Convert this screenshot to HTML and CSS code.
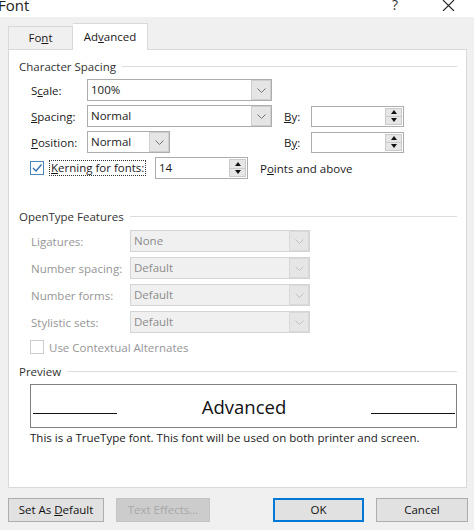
FILE: index.html
```html
<!DOCTYPE html>
<html>
<head>
<meta charset="utf-8">
<link rel="stylesheet" href="styles.css">
</head>
<body>
<div class="dialog">
  <div class="titlebar">
    <span class="title">Font</span>
    <span class="help">?</span>
    <svg class="close" width="13" height="11" viewBox="0 0 13 11"><path d="M1 0 L12 11 M12 0 L1 11" stroke="#222" stroke-width="1.1" fill="none"/></svg>
  </div>
  <div class="tabs">
    <div class="tab">Fo<u>n</u>t</div>
    <div class="tab active">Ad<u>v</u>anced</div>
  </div>
  <div class="panel">
    <div class="group-title gt-char"><span>Character Spacing</span><i></i></div>

    <div class="crow r1">
      <span class="lbl">S<u>c</u>ale:</span>
      <div class="combo w185"><span class="val">100%</span><span class="dd"><svg width="9" height="5" viewBox="0 0 9 5"><polyline points="0.5,0.5 4.5,4.5 8.5,0.5" fill="none" stroke="#707070"/></svg></span></div>
    </div>
    <div class="crow">
      <span class="lbl"><u>S</u>pacing:</span>
      <div class="combo w185"><span class="val">Normal</span><span class="dd"><svg width="9" height="5" viewBox="0 0 9 5"><polyline points="0.5,0.5 4.5,4.5 8.5,0.5" fill="none" stroke="#707070"/></svg></span></div>
      <span class="by"><u>B</u>y:</span>
      <div class="spin"><span class="val"></span><span class="arrows"><span class="up"></span><span class="dn"></span></span></div>
    </div>
    <div class="crow">
      <span class="lbl"><u>P</u>osition:</span>
      <div class="cell"><div class="combo w83"><span class="val">Normal</span><span class="dd"><svg width="9" height="5" viewBox="0 0 9 5"><polyline points="0.5,0.5 4.5,4.5 8.5,0.5" fill="none" stroke="#707070"/></svg></span></div></div>
      <span class="by">B<u>y</u>:</span>
      <div class="spin"><span class="val"></span><span class="arrows"><span class="up"></span><span class="dn"></span></span></div>
    </div>
    <div class="krow">
      <div class="kcheck">
        <span class="cb checked"><svg width="12" height="12" viewBox="0 0 12 12"><polyline points="2,6 5,9 10.5,2.5" fill="none" stroke="#2f6fb0" stroke-width="1.3"/></svg></span>
        <span class="focus"><u>K</u>erning for fonts:</span>
      </div>
      <div class="spin"><span class="val">14</span><span class="arrows"><span class="up"></span><span class="dn"></span></span></div>
      <span class="pts">P<u>o</u>ints and above</span>
    </div>

    <div class="group-title gt-open"><span>OpenType Features</span><i></i></div>

    <div class="orow o1">
      <span class="olbl">Ligatures:</span>
      <div class="combo dis"><span class="val">None</span><span class="dd"><svg width="9" height="5" viewBox="0 0 9 5"><polyline points="0.5,0.5 4.5,4.5 8.5,0.5" fill="none" stroke="#c0c0c0"/></svg></span></div>
    </div>
    <div class="orow">
      <span class="olbl">Number spacing:</span>
      <div class="combo dis"><span class="val">Default</span><span class="dd"><svg width="9" height="5" viewBox="0 0 9 5"><polyline points="0.5,0.5 4.5,4.5 8.5,0.5" fill="none" stroke="#c0c0c0"/></svg></span></div>
    </div>
    <div class="orow">
      <span class="olbl">Number forms:</span>
      <div class="combo dis"><span class="val">Default</span><span class="dd"><svg width="9" height="5" viewBox="0 0 9 5"><polyline points="0.5,0.5 4.5,4.5 8.5,0.5" fill="none" stroke="#c0c0c0"/></svg></span></div>
    </div>
    <div class="orow">
      <span class="olbl">Stylistic sets:</span>
      <div class="combo dis"><span class="val">Default</span><span class="dd"><svg width="9" height="5" viewBox="0 0 9 5"><polyline points="0.5,0.5 4.5,4.5 8.5,0.5" fill="none" stroke="#c0c0c0"/></svg></span></div>
    </div>
    <div class="ctx">
      <span class="cb dis"></span>
      <span class="ctxlbl">Use Contextual Alternates</span>
    </div>

    <div class="group-title gt-prev"><span>Preview</span><i></i></div>
    <div class="preview">
      <span class="pline left"></span>
      <span class="ptext">Advanced</span>
      <span class="pline right"></span>
    </div>
    <div class="note">This is a TrueType font. This font will be used on both printer and screen.</div>
  </div>
  <div class="buttons">
    <div class="btn b1">Set As <u>D</u>efault</div>
    <div class="btn b2 disabled">Text Effects...</div>
    <div class="btn b3 default">OK</div>
    <div class="btn b4">Cancel</div>
  </div>
</div>
</body>
</html>
```
FILE: styles.css
```css
* { box-sizing: border-box; }
html, body { margin: 0; padding: 0; }
body {
  width: 474px;
  height: 530px;
  overflow: hidden;
  background: #f0f0f0;
  font-family: "Open Sans", "Noto Sans", sans-serif;
  font-size: 11.5px;
  color: #1a1a1a;
}
u { text-decoration: underline; text-underline-offset: 1px; }

.dialog { width: 474px; height: 530px; }

.titlebar {
  height: 17px;
  background: #fff;
  position: relative;
  overflow: hidden;
}
.title {
  position: absolute;
  left: -2px;
  top: -5px;
  font-size: 15px;
  line-height: 20px;
  color: #222;
}
.help {
  position: absolute;
  left: 392px;
  top: -5px;
  font-size: 14px;
  line-height: 20px;
  color: #333;
}
.close { position: absolute; left: 442px; top: 0; }

.tabs {
  display: flex;
  align-items: flex-end;
  height: 32px;
  padding-left: 8px;
  position: relative;
  z-index: 2;
}
.tab {
  height: 23px;
  width: 65px;
  border: 1px solid #d9d9d9;
  border-bottom: none;
  background: #f0f0f0;
  text-align: center;
  line-height: 22px;
  color: #1a1a1a;
}
.tab.active {
  width: 75px;
  height: 27px;
  margin-bottom: -1px;
  background: #fff;
  line-height: 26px;
  border-left: none;
}

.panel {
  margin: 0 7px 0 8px;
  height: 439px;
  border: 1px solid #d9d9d9;
  background: #fff;
}

.group-title {
  display: flex;
  align-items: center;
  height: 16px;
  padding: 0 9px 0 10px;
  color: #333;
}
.group-title i {
  flex: 1;
  height: 1px;
  background: #dcdcdc;
  margin-left: 6px;
}
.gt-char { margin-top: 8px; }
.gt-open { margin-top: 29px; }
.gt-prev { margin-top: 8px; }

.crow {
  display: grid;
  grid-template-columns: 56px 185px 12px 27px 93px;
  align-items: center;
  height: 22px;
  margin-top: 4px;
  padding-left: 22px;
}
.crow.r1 { margin-top: 5px; }
.crow .by { grid-column: 4; }
.crow .spin { grid-column: 5; height: 21px; }

.combo {
  display: flex;
  height: 22px;
  border: 1px solid #acacac;
  background: #fff;
}
.combo .val {
  flex: 1;
  padding-left: 3px;
  line-height: 20px;
}
.combo .dd {
  width: 20px;
  background: #e5e5e5;
  border: 1px solid #cfcfcf;
  display: flex;
  align-items: center;
  justify-content: center;
}
.w185 { width: 185px; }
.w83 { width: 83px; }

.spin {
  display: flex;
  width: 93px;
  height: 22px;
  border: 1px solid #acacac;
  background: #fff;
}
.spin .val { flex: 1; padding-left: 3px; line-height: 20px; }
.arrows {
  width: 18px;
  display: flex;
  flex-direction: column;
  padding: 1px 1px 1px 0;
}
.arrows span {
  flex: 1;
  background: #e6e6e6;
  border: 1px solid #cacaca;
  position: relative;
}
.arrows .dn { border-top: none; }
.arrows span::after {
  content: "";
  position: absolute;
  left: 50%;
  top: 50%;
  width: 0;
  height: 0;
  border-left: 3.5px solid transparent;
  border-right: 3.5px solid transparent;
  transform: translate(-50%, -50%);
}
.arrows .up::after { border-bottom: 4px solid #111; }
.arrows .dn::after { border-top: 4px solid #111; }

.krow {
  display: flex;
  align-items: center;
  height: 22px;
  margin-top: 4px;
  padding-left: 21px;
}
.kcheck {
  width: 125px;
  display: flex;
  align-items: center;
}
.cb {
  width: 14px;
  height: 14px;
  border: 1px solid #c8c8c8;
  background: #fff;
  display: flex;
  align-items: center;
  justify-content: center;
}
.cb.checked { border-color: #4a86c0; }
.focus {
  margin-left: 5px;
  border: 1px dotted #333;
  padding: 0 1px;
  line-height: 14px;
}
.pts { margin-left: 12px; }

.orow {
  display: flex;
  align-items: center;
  height: 22px;
  margin-top: 5px;
  padding-left: 22px;
}
.orow.o1 { margin-top: 6px; }
.olbl { width: 99px; color: #969696; }
.combo.dis {
  width: 180px;
  background: #f0f0f0;
  border-color: #d4d4d4;
  color: #8c8c8c;
}
.combo.dis .dd { background: #e6e6e6; border-color: #d9d9d9; }

.ctx {
  display: flex;
  align-items: center;
  height: 16px;
  margin-top: 6px;
  padding-left: 21px;
}
.ctx .cb { border-color: #cccccc; }
.ctxlbl { margin-left: 5px; color: #969696; }

.preview {
  margin: 5px 0 0 21px;
  width: 427px;
  height: 44px;
  border: 1px solid #808080;
  display: flex;
  align-items: center;
  padding: 0 1px 0 2px;
}
.pline {
  width: 84px;
  height: 1px;
  background: #111;
  margin-top: 14px;
}
.ptext {
  flex: 1;
  text-align: center;
  font-size: 18.5px;
  color: #111;
}
.note {
  margin: 3px 0 0 21px;
  line-height: 14px;
  color: #1a1a1a;
}

.buttons {
  display: flex;
  margin-top: 10px;
  padding: 0 6px 0 8px;
}
.btn {
  height: 24px;
  border: 1px solid #adadad;
  background: #e1e1e1;
  text-align: center;
  line-height: 22px;
  color: #111;
}
.b1 { width: 96px; }
.b2 { width: 94px; margin-left: 12px; }
.b3 { width: 91px; margin-left: auto; }
.b4 { width: 92px; margin-left: 12px; }
.btn.disabled { background: #cccccc; border-color: #c4c4c4; color: #a8a8a8; }
.btn.default { border: 2px solid #0078d7; line-height: 20px; }
```
